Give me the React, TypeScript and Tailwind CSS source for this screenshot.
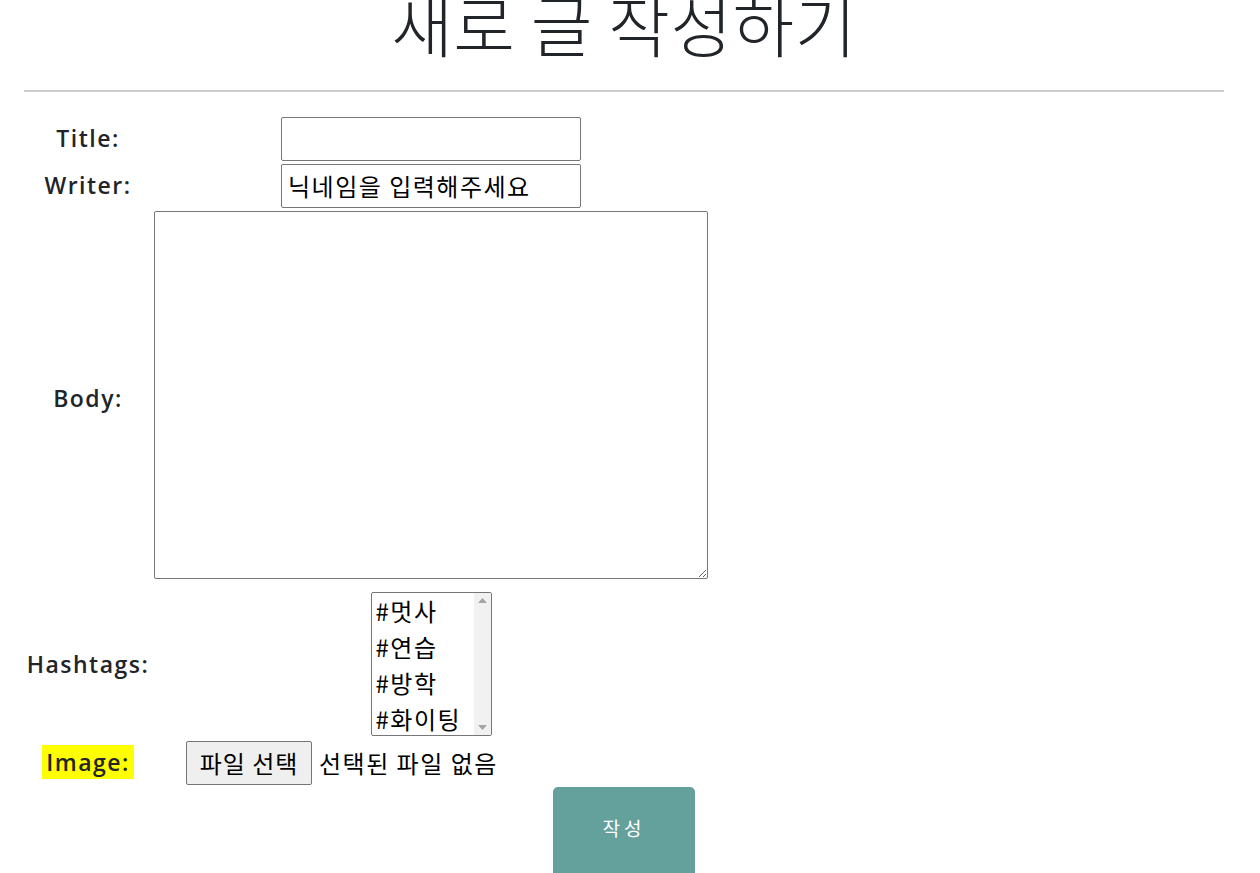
const HASHTAGS = ["#멋사", "#연습", "#방학", "#화이팅"];

const labelFont = { fontFamily: '"Open Sans", "Noto Sans CJK KR", sans-serif' };
const korean = { fontFamily: '"Noto Sans CJK KR", sans-serif' };

export default function App() {
  return (
    <div className="h-[873px] w-[1260px] overflow-hidden bg-white">
      <div className="w-[1248px] px-[24px]">
        <h1
          className="mt-[-25px] text-center text-[67px] font-light leading-[96px] tracking-[0.5px] text-[#212529]"
          style={korean}
        >
          새로 글 작성하기
        </h1>
        <div className="mt-[19px] h-[2px] w-full bg-[#cccccc]" />

        <form className="mt-[25px]">
          <div className="grid w-[686px] grid-cols-[128px_558px]">
            <FormLabel className="pb-[2px]">Title:</FormLabel>
            <div className="flex justify-center">
              <input
                type="text"
                className="h-[44px] w-[300px] rounded-[2px] border border-[#767676] px-[6px] text-[24px]"
              />
            </div>

            <FormLabel className="mt-[3px] pb-[2px]">Writer:</FormLabel>
            <div className="mt-[3px] flex justify-center">
              <div
                className="flex h-[44px] w-[300px] items-center rounded-[2px] border border-[#767676] px-[6px] text-[24px] tracking-[1.5px] text-black"
                style={korean}
              >
                닉네임을 입력해주세요
              </div>
            </div>

            <FormLabel className="mt-[3px] pt-[6px]">Body:</FormLabel>
            <div className="mt-[3px] flex justify-center">
              <textarea className="block h-[368px] w-[554px] resize rounded-[2px] border border-[#767676]" />
            </div>

            <FormLabel className="mt-[13px]">Hashtags:</FormLabel>
            <div className="mt-[13px] flex justify-center">
              <HashtagList />
            </div>

            <FormLabel className="mt-[5px] pb-[2px]">
              <span className="bg-[#ffff00] px-[4px]">Image:</span>
            </FormLabel>
            <div className="mt-[5px] flex items-center pl-[34px]">
              <div
                className="flex h-[44px] w-[126px] items-center justify-center rounded-[2px] border border-[#767676] bg-[#efefef] text-[24px] tracking-[1px] text-black"
                style={korean}
              >
                파일 선택
              </div>
              <span className="ml-[7px] text-[24px] tracking-[1.5px] text-black" style={korean}>
                선택된 파일 없음
              </span>
            </div>
          </div>

          <div className="mt-[2px] flex justify-center">
            <button
              type="button"
              className="h-[92px] w-[142px] rounded-[5px] bg-[#64a19d] pb-[10px] text-[19px] tracking-[4px] text-white"
              style={korean}
            >
              작성
            </button>
          </div>
        </form>
      </div>
    </div>
  );
}

function FormLabel({ children, className = "" }: { children: React.ReactNode; className?: string }) {
  return (
    <div
      className={`flex items-center justify-center text-[23px] font-semibold tracking-[1.5px] text-[#212529] ${className}`}
      style={labelFont}
    >
      {children}
    </div>
  );
}

function HashtagList() {
  return (
    <div className="flex h-[144px] w-[121px] overflow-hidden rounded-[2px] border border-[#767676] bg-white">
      <ul className="flex-1 pl-[4px] text-[24px] leading-[36px] tracking-[1.5px] text-black" style={korean}>
        {HASHTAGS.map((tag) => (
          <li key={tag}>{tag}</li>
        ))}
      </ul>
      <div className="flex w-[17px] flex-col items-center justify-between bg-[#f1f1f1] py-[5px]">
        <svg width="9" height="5" viewBox="0 0 9 5">
          <path d="M0 5 L4.5 0 L9 5 Z" fill="#a3a3a3" />
        </svg>
        <svg width="9" height="5" viewBox="0 0 9 5">
          <path d="M0 0 L4.5 5 L9 0 Z" fill="#a3a3a3" />
        </svg>
      </div>
    </div>
  );
}
